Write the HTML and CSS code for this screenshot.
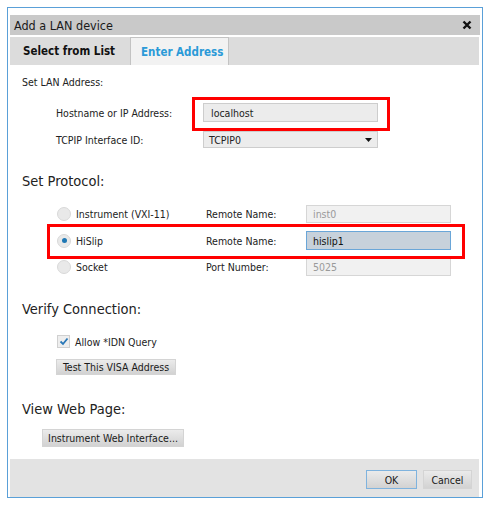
FILE: index.html
```html
<!DOCTYPE html>
<html>
<head>
<meta charset="utf-8">
<link rel="stylesheet" href="styles.css">
</head>
<body>
<div class="dialog">
  <div class="titlebar">
    <span class="title">Add a LAN device</span>
    <svg class="close" width="10" height="10" viewBox="0 0 10 10"><path d="M1.5 1.5 L8.5 8.5 M8.5 1.5 L1.5 8.5" stroke="#111" stroke-width="2.4"/></svg>
  </div>
  <div class="tabs">
    <div class="tab">Select from List</div>
    <div class="tab active">Enter Address</div>
  </div>
  <div class="content">
    <div class="small-head">Set LAN Address:</div>
    <div class="field-row host-row">
      <span class="flabel">Hostname or IP Address:</span>
      <div class="input wide">localhost</div>
    </div>
    <div class="field-row tcpip-row">
      <span class="flabel">TCPIP Interface ID:</span>
      <div class="input wide select">TCPIP0<svg class="arrow" width="7" height="4" viewBox="0 0 7 4"><path d="M0 0 H7 L3.5 4 Z" fill="#111"/></svg></div>
    </div>

    <div class="head proto-head">Set Protocol:</div>
    <div class="proto-row r1">
      <span class="radio"></span>
      <span class="plabel">Instrument (VXI-11)</span>
      <span class="rlabel">Remote Name:</span>
      <div class="input pinput disabled">inst0</div>
    </div>
    <div class="proto-row r2">
      <span class="radio checked"></span>
      <span class="plabel">HiSlip</span>
      <span class="rlabel">Remote Name:</span>
      <div class="input pinput focused">hislip1</div>
    </div>
    <div class="proto-row r3">
      <span class="radio"></span>
      <span class="plabel">Socket</span>
      <span class="rlabel">Port Number:</span>
      <div class="input pinput disabled">5025</div>
    </div>

    <div class="head verify-head">Verify Connection:</div>
    <div class="check-row">
      <span class="checkbox"><svg width="10" height="9" viewBox="0 0 10 9"><path d="M1.5 4.5 L4 7 L8.5 1.5" stroke="#2a78b8" stroke-width="1.8" fill="none"/></svg></span>
      <span class="clabel">Allow *IDN Query</span>
    </div>
    <div class="btn test-btn">Test This VISA Address</div>

    <div class="head web-head">View Web Page:</div>
    <div class="btn web-btn">Instrument Web Interface...</div>

    <div class="annot annot1"></div>
    <div class="annot annot2"></div>
  </div>
  <div class="footer">
    <div class="btn ok-btn">OK</div>
    <div class="btn cancel-btn">Cancel</div>
  </div>
</div>
</body>
</html>
```

FILE: styles.css
```css
html, body {
  margin: 0;
  padding: 0;
  background: #ffffff;
}
body {
  font-family: "DejaVu Sans Condensed", "DejaVu Sans", sans-serif;
  font-size: 10.5px;
  color: #222;
  white-space: nowrap;
}
.dialog {
  margin: 7px 0 0 7px;
  width: 476px;
  height: 491px;
  box-sizing: border-box;
  border: 1px solid #5aa0d8;
  padding: 7px 2px 0 2px;
  display: flex;
  flex-direction: column;
  background: #fff;
}
.titlebar {
  height: 20px;
  background: #c9c9c9;
  display: flex;
  align-items: center;
  justify-content: space-between;
  padding: 0 8px 0 4px;
  flex: none;
}
.title {
  font-size: 12.5px;
  color: #1a1a1a;
}
.close { display: block; }
.tabs {
  margin-top: 2px;
  height: 28px;
  background: #dcdcdc;
  display: flex;
  align-items: flex-end;
  flex: none;
  margin-right: 1px;
}
.tab {
  height: 28px;
  box-sizing: border-box;
  padding: 0 0 0 13px;
  display: flex;
  align-items: center;
  font-weight: bold;
  font-size: 11.5px;
  color: #111;
  width: 120px;
}
.tab.active {
  width: 99px;
  height: 29px;
  margin-bottom: -1px;
  background: #f2f2f2;
  border: 1px solid #c3c3c3;
  border-bottom: none;
  color: #2b9ad8;
  padding: 0 0 0 10px;
}
.content {
  position: relative;
  height: 394px;
  flex: none;
  padding: 10px 0 0 12px;
  box-sizing: border-box;
  background-color: #fff;
  background-image: radial-gradient(#f1f1f1 0.5px, transparent 0.7px);
  background-size: 6px 6px;
}
.small-head {
  line-height: 14px;
  height: 14px;
  font-size: 10.5px;
}
.head {
  font-size: 14.5px;
  line-height: 18px;
  height: 18px;
  color: #222;
}
.field-row {
  display: flex;
  align-items: center;
  margin-left: 34px;
}
.flabel {
  width: 147px;
  flex: none;
}
.input {
  box-sizing: border-box;
  background: #ececec;
  border: 1px solid #cdcdcd;
  display: flex;
  align-items: center;
  padding-left: 7px;
  color: #222;
}
.input.wide {
  width: 175px;
}
.host-row { margin-top: 14px; }
.host-row .input { height: 19px; }
.tcpip-row { margin-top: 9px; }
.tcpip-row .input { height: 17px; padding-left: 5px; justify-content: space-between; padding-right: 5px; }
.arrow { display: block; }
.proto-head { margin-top: 24px; }
.proto-row {
  display: flex;
  align-items: center;
  margin-left: 35px;
}
.radio {
  width: 12px;
  height: 12px;
  border-radius: 50%;
  background: #e9e9e9;
  border: 1px solid #d9d9d9;
  flex: none;
  display: flex;
  align-items: center;
  justify-content: center;
}
.radio.checked::after {
  content: "";
  width: 5px;
  height: 5px;
  border-radius: 50%;
  background: #1f78b4;
}
.plabel {
  margin-left: 5px;
  width: 130px;
  flex: none;
}
.rlabel {
  width: 100px;
  flex: none;
}
.pinput {
  width: 145px;
  height: 18px;
  padding-left: 6px;
}
.pinput.disabled {
  background: #f1f1f1;
  border-color: #d6d6d6;
  color: #9a9a9a;
}
.pinput.focused {
  background: #c7d1db;
  border-color: #6aa6d8;
  height: 19px;
  color: #111;
}
.r1 { margin-top: 15px; }
.r2 { margin-top: 8px; }
.r3 { margin-top: 8px; }
.verify-head { margin-top: 24px; }
.check-row {
  display: flex;
  align-items: center;
  margin: 17px 0 0 35px;
  height: 13px;
}
.checkbox {
  width: 13px;
  height: 13px;
  box-sizing: border-box;
  background: #eeeeee;
  border: 1px solid #d0d0d0;
  display: flex;
  align-items: center;
  justify-content: center;
}
.checkbox svg { display: block; }
.clabel { margin-left: 5px; }
.btn {
  box-sizing: border-box;
  display: flex;
  align-items: center;
  justify-content: center;
  background: linear-gradient(#ebebeb, #d2d2d2);
  border: 1px solid #d4d4d4;
  color: #1a1a1a;
  width: max-content;
}
.test-btn {
  margin: 11px 0 0 34px;
  height: 16px;
  width: 120px;
}
.web-head { margin-top: 25px; }
.web-btn {
  margin: 11px 0 0 20px;
  height: 18px;
  width: 142px;
}
.annot {
  position: absolute;
  border: 3px solid #ff0000;
  box-sizing: border-box;
}
.annot1 {
  left: 182px;
  top: 32px;
  width: 198px;
  height: 34px;
}
.annot2 {
  left: 37px;
  top: 159px;
  width: 418px;
  height: 35px;
}
.footer {
  flex: 1;
  margin-right: 1px;
  background: #e3e3e3;
  display: flex;
  justify-content: flex-end;
  align-items: flex-start;
  padding: 11px 7px 0 0;
  gap: 6px;
}
.ok-btn {
  width: 51px;
  height: 19px;
  border-color: #7fb3de;
}
.cancel-btn {
  width: 49px;
  height: 19px;
}
```
